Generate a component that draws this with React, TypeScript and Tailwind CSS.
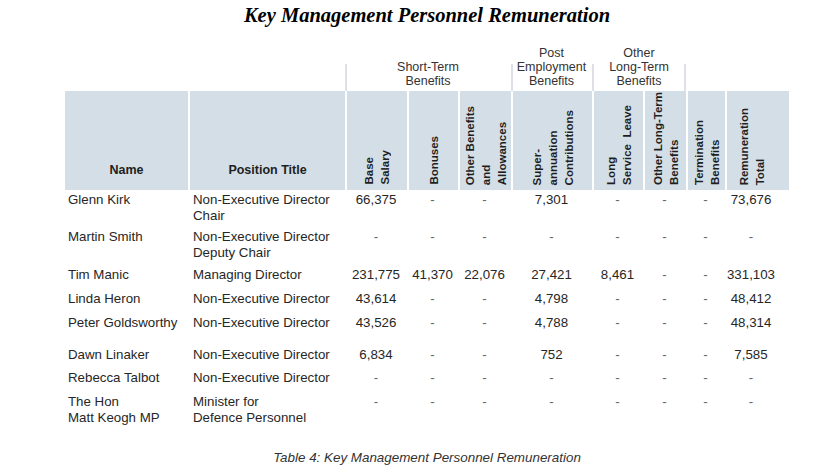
const rows = [
  { name: ["Glenn Kirk"], pos: ["Non-Executive Director", "Chair"], vals: ["66,375", "-", "-", "7,301", "-", "-", "-", "73,676"], h: "h-[37px]" },
  { name: ["Martin Smith"], pos: ["Non-Executive Director", "Deputy Chair"], vals: ["-", "-", "-", "-", "-", "-", "-", "-"], h: "h-[38px]" },
  { name: ["Tim Manic"], pos: ["Managing Director"], vals: ["231,775", "41,370", "22,076", "27,421", "8,461", "-", "-", "331,103"], h: "h-[24px]" },
  { name: ["Linda Heron"], pos: ["Non-Executive Director"], vals: ["43,614", "-", "-", "4,798", "-", "-", "-", "48,412"], h: "h-[24px]" },
  { name: ["Peter Goldsworthy"], pos: ["Non-Executive Director"], vals: ["43,526", "-", "-", "4,788", "-", "-", "-", "48,314"], h: "h-[32px]" },
  { name: ["Dawn Linaker"], pos: ["Non-Executive Director"], vals: ["6,834", "-", "-", "752", "-", "-", "-", "7,585"], h: "h-[23px]" },
  { name: ["Rebecca Talbot"], pos: ["Non-Executive Director"], vals: ["-", "-", "-", "-", "-", "-", "-", "-"], h: "h-[24px]" },
  { name: ["The Hon", "Matt Keogh MP"], pos: ["Minister for", "Defence Personnel"], vals: ["-", "-", "-", "-", "-", "-", "-", "-"], h: "h-[40px]" },
];

const rotated = [
  ["Base", "Salary"],
  ["Bonuses"],
  ["Other Benefits", "and", "Allowances"],
  ["Super-", "annuation", "Contributions"],
  ["Long", "Service\u00a0 Leave"],
  ["Other Long-Term", "Benefits"],
  ["Termination", "Benefits"],
  ["Remuneration", "Total"],
];

function Lines({ lines }: { lines: string[] }) {
  return (
    <>
      {lines.map((l, i) => (
        <div key={i}>{l}</div>
      ))}
    </>
  );
}

function Group({ lines, span, right }: { lines: string[]; span: string; right?: boolean }) {
  return (
    <div className={`relative flex items-end justify-center pb-[3px] text-center ${span}`}>
      <span className="absolute bottom-0 left-0 h-[27px] w-[2px] bg-[#dde1e5]" />
      {right && <span className="absolute bottom-0 right-0 h-[27px] w-[2px] bg-[#dde1e5]" />}
      <div className="leading-[14px]">
        <Lines lines={lines} />
      </div>
    </div>
  );
}

export default function App() {
  return (
    <div className="min-h-[475px] w-[837px] bg-white font-['Liberation_Sans',Arial,sans-serif] text-[#262626]">
      <div className="ml-[65px] w-[724px]">
        <h1 className="text-center font-['Liberation_Serif',serif] text-[20.5px] font-bold italic leading-[30px] text-black">
          Key Management Personnel Remuneration
        </h1>

        {/* group headings */}
        <div className="mt-[14px] grid h-[47px] grid-cols-[123px_157px_62px_51px_53px_81px_51px_43px_39px_64px] text-[12.5px] text-[#333]">
          <div className="col-span-2" />
          <Group span="col-span-3" lines={["Short-Term", "Benefits"]} />
          <Group span="col-span-1" lines={["Post", "Employment", "Benefits"]} />
          <Group span="col-span-2" lines={["Other", "Long-Term", "Benefits"]} right />
          <div className="col-span-2" />
        </div>

        {/* header band */}
        <div className="grid h-[99px] grid-cols-[123px_157px_62px_51px_53px_81px_51px_43px_39px_64px] bg-[#d3dee6] font-bold text-[#1f1f1f]">
          <div className="flex items-end justify-center pb-[12px] text-[12.5px] leading-[16px]">Name</div>
          <div className="flex items-end justify-center border-l-2 border-white pb-[12px] text-[12.5px] leading-[16px]">
            Position Title
          </div>
          {rotated.map((lines, i) => (
            <div
              key={i}
              className={`flex items-end justify-center border-l-2 border-white pb-[5px] ${i === 7 ? "pr-[12px]" : ""}`}
            >
              <div className="rotate-180 whitespace-nowrap text-[11.5px] leading-[16px] [writing-mode:vertical-rl]">
                <Lines lines={lines} />
              </div>
            </div>
          ))}
        </div>

        {/* body */}
        <div className="text-[13.3px] leading-[16px]">
          {rows.map((r, i) => (
            <div
              key={i}
              className={`grid grid-cols-[123px_157px_62px_51px_53px_81px_51px_43px_39px_64px] pt-[2px] ${r.h}`}
            >
              <div className="pl-[3px]">
                <Lines lines={r.name} />
              </div>
              <div className="pl-[5px]">
                <Lines lines={r.pos} />
              </div>
              {r.vals.map((v, j) => (
                <div key={j} className={`text-center ${v === "-" ? "text-[#666]" : ""} ${j === 7 ? "pr-[12px]" : ""}`}>
                  {v}
                </div>
              ))}
            </div>
          ))}
        </div>

        <p className="mt-[17px] text-center text-[13.4px] italic leading-[18px] text-[#333]">
          Table 4: Key Management Personnel Remuneration
        </p>
      </div>
    </div>
  );
}
